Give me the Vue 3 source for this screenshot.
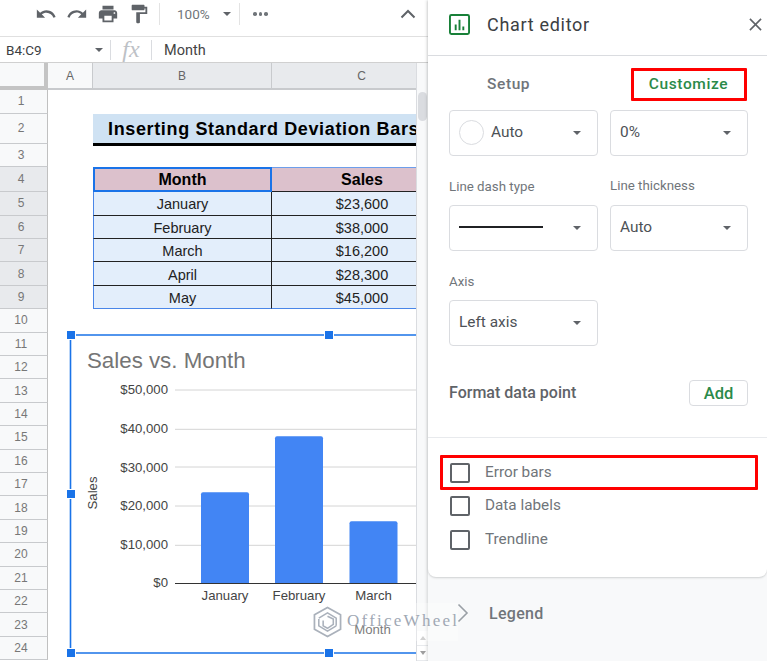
<script setup>
const rowNumbers = Array.from({ length: 24 }, (_, i) => i + 1)
const tableRows = {
  4: { b: 'Month', c: 'Sales', head: true },
  5: { b: 'January', c: '$23,600' },
  6: { b: 'February', c: '$38,000' },
  7: { b: 'March', c: '$16,200' },
  8: { b: 'April', c: '$28,300' },
  9: { b: 'May', c: '$45,000' }
}
const gridY = [390, 429.3, 467, 506, 545.3]
const yLabels = ['$50,000', '$40,000', '$30,000', '$20,000', '$10,000', '$0']
const yLabelY = [393.5, 432.5, 471.5, 509.5, 548.5, 587]
const bars = [
  { name: 'January', x: 201, top: 492.3 },
  { name: 'February', x: 275, top: 436.3 },
  { name: 'March', x: 349.5, top: 521.3 }
]
const handles = [
  [71, 335], [329, 335], [71, 494], [71, 653], [329, 653]
]
const checks = ['Error bars', 'Data labels', 'Trendline']
</script>

<template>
  <div class="app">
    <section class="sheet">
      <div class="toolbar">
        <svg class="tb-icon" viewBox="0 0 24 24"><path d="M12.5 8c-2.65 0-5.05.99-6.9 2.6L2 7v9h9l-3.62-3.62c1.39-1.16 3.16-1.88 5.12-1.88 3.54 0 6.55 2.31 7.6 5.5l2.37-.78C21.08 11.03 17.15 8 12.5 8z"/></svg>
        <svg class="tb-icon" viewBox="0 0 24 24"><path d="M18.4 10.6C16.55 8.99 14.15 8 11.5 8c-4.65 0-8.58 3.03-9.96 7.22l2.37.78c1.05-3.19 4.05-5.5 7.59-5.5 1.95 0 3.73.72 5.12 1.88L13 16h9V7l-3.6 3.6z"/></svg>
        <svg class="tb-icon" viewBox="0 0 24 24"><path d="M19 8H5c-1.66 0-3 1.34-3 3v6h4v4h12v-4h4v-6c0-1.66-1.34-3-3-3zm-3 11H8v-5h8v5zm3-7c-.55 0-1-.45-1-1s.45-1 1-1 1 .45 1 1-.45 1-1 1zm-1-9H6v4h12V3z"/></svg>
        <svg class="tb-icon" viewBox="0 0 24 24"><path d="M18 4V3c0-.55-.45-1-1-1H5c-.55 0-1 .45-1 1v4c0 .55.45 1 1 1h12c.55 0 1-.45 1-1V6h1v4H9v11c0 .55.45 1 1 1h2c.55 0 1-.45 1-1v-9h8V4h-3z"/></svg>
        <span class="tb-sep first"></span>
        <span class="zoom-val">100%</span>
        <span class="caret zoom-caret"></span>
        <span class="tb-sep second"></span>
        <span class="dots"><i></i><i></i><i></i></span>
        <svg class="collapse" viewBox="0 0 16 10"><path d="M1.5 8.5 8 2l6.5 6.5" /></svg>
      </div>

      <div class="formula">
        <span class="namebox">B4:C9</span>
        <span class="caret name-caret"></span>
        <span class="fsep"></span>
        <span class="fx">fx</span>
        <span class="fsep"></span>
        <span class="fvalue">Month</span>
      </div>

      <div class="body">
        <div class="grid">
          <div class="corner"></div>
          <div class="colhead">A</div>
          <div class="colhead selected">B</div>
          <div class="colhead selected last">C</div>

          <template v-for="n in rowNumbers" :key="n">
            <div class="rowhead" :class="{ selected: tableRows[n] }">{{ n }}</div>
            <div class="blank"></div>
            <div v-if="n === 2" class="title-cell">Inserting Standard Deviation Bars</div>
            <template v-else-if="tableRows[n]">
              <div class="cell" :class="{ head: tableRows[n].head, active: n === 4, bottom: n === 9 }">{{ tableRows[n].b }}</div>
              <div class="cell c" :class="{ head: tableRows[n].head, top: n === 4, bottom: n === 9 }">{{ tableRows[n].c }}</div>
            </template>
            <div v-else class="blank wide"></div>
          </template>
        </div>

        <div class="scrollbar">
          <div class="thumb"></div>
          <div class="arrows">
            <span class="arrow-btn"><span class="arrow up"></span></span>
            <span class="arrow-btn"><span class="arrow down"></span></span>
          </div>
        </div>

        <svg class="chart" viewBox="48 90 368 571" width="368" height="571">
          <rect x="70.5" y="335" width="346" height="318" fill="#fff" />
          <text x="87" y="367.5" class="ch-title">Sales vs. Month</text>
          <line v-for="y in gridY" :key="y" x1="175" x2="416" :y1="y" :y2="y" class="gridline" />
          <text v-for="(l, i) in yLabels" :key="l" x="168" :y="yLabelY[i]" text-anchor="end" class="ch-label">{{ l }}</text>
          <g v-for="b in bars" :key="b.name">
            <path :d="`M${b.x} 583.5V${b.top + 2}q0-2 2-2h44q2 0 2 2V583.5z`" fill="#4285f4" />
            <text :x="b.x + 24" y="600" text-anchor="middle" class="ch-label">{{ b.name }}</text>
          </g>
          <line x1="175" x2="416" y1="583.5" y2="583.5" stroke="#333" stroke-width="1" />
          <text x="372.5" y="634" text-anchor="middle" class="ch-label">Month</text>
          <text transform="translate(96.5 493) rotate(-90)" text-anchor="middle" class="ch-label">Sales</text>
          <path d="M70.5 653V335H416M70.5 653H416" fill="none" stroke="#1a73e8" stroke-width="1.6" />
          <rect v-for="h in handles" :key="h.join()" :x="h[0] - 4.5" :y="h[1] - 4.5" width="9" height="9" fill="#1a73e8" stroke="#fff" stroke-width="1" />
        </svg>
      </div>
    </section>

    <aside class="panel">
      <div class="card">
        <header class="panel-head">
          <svg class="chart-icon" viewBox="0 0 22 22">
            <rect x="1" y="1" width="20" height="20" rx="1.5" fill="none" stroke="#188038" stroke-width="2" />
            <path d="M6 11h2v6H6zM10 6h2v11h-2zM14 13h2v4h-2z" fill="#188038" />
          </svg>
          <span class="panel-title">Chart editor</span>
          <svg class="close" viewBox="0 0 14 14"><path d="M1 1l12 12M13 1 1 13" /></svg>
        </header>

        <div class="tabs">
          <span class="tab">Setup</span>
          <span class="tab customize">Customize</span>
        </div>

        <div class="fields">
          <div class="select"><span class="swatch"></span><span class="sel-text">Auto</span><span class="caret"></span></div>
          <div class="select"><span class="sel-text">0%</span><span class="caret"></span></div>

          <div class="field-label">Line dash type</div>
          <div class="field-label raised">Line thickness</div>
          <div class="select"><span class="dash"></span><span class="caret"></span></div>
          <div class="select"><span class="sel-text">Auto</span><span class="caret"></span></div>

          <div class="field-label full">Axis</div>
          <div class="select"><span class="sel-text">Left axis</span><span class="caret"></span></div>
        </div>

        <div class="format-row">
          <span class="format-label">Format data point</span>
          <span class="add">Add</span>
        </div>

        <div class="divider"></div>

        <div class="checks">
          <span class="annot"></span>
          <label v-for="c in checks" :key="c" class="check">
            <span class="box"></span>
            <span class="check-text">{{ c }}</span>
          </label>
        </div>
      </div>

      <div class="legend">
        <svg class="chev" viewBox="0 0 12 20"><path d="M1.5 1.5 10 10l-8.5 8.5" /></svg>
        <span>Legend</span>
      </div>
    </aside>

    <div class="watermark">
      <svg viewBox="0 0 30 32" class="wm-logo">
        <path d="M15 1 28.5 8.5V23.5L15 31 1.5 23.5V8.5z" fill="none" stroke="#aab1bb" stroke-width="1.8" />
        <path d="M6 12 15 6.5 24 12V20M24 20 15 25.5 6 20V13M10.5 14.5V20L15 22.5 21 18.5V13L15 10" fill="none" stroke="#aab1bb" stroke-width="1.6" />
      </svg>
      <span class="wm-text">OfficeWheel</span>
    </div>
  </div>
</template>

<style>
html, body { margin: 0; background: #fff; }
</style>

<style scoped>
.app {
  position: relative;
  width: 767px;
  height: 661px;
  overflow: hidden;
  display: flex;
  font-family: Roboto, "Liberation Sans", sans-serif;
  color: #5f6368;
}
.sheet {
  width: 428px;
  flex: none;
  display: flex;
  flex-direction: column;
  background: #fff;
}
.toolbar {
  height: 37px;
  flex: none;
  box-sizing: border-box;
  display: flex;
  align-items: center;
  padding: 0 0 8px 35px;
  border-bottom: 1px solid #e0e0e0;
}
.tb-icon {
  width: 22px;
  height: 22px;
  fill: #5f6368;
  margin-right: 9px;
  flex: none;
}
.tb-sep {
  width: 1px;
  height: 22px;
  background: #e3e3e3;
}
.tb-sep.first { margin-right: 17px; }
.tb-sep.second { margin-left: 8px; margin-right: 13px; }
.zoom-val { font-size: 13.5px; width: 46px; color: #70757a; padding-bottom: 1px; }
.caret {
  width: 0;
  height: 0;
  border-left: 4.5px solid transparent;
  border-right: 4.5px solid transparent;
  border-top: 4.5px solid #5f6368;
  flex: none;
}
.dots { display: flex; gap: 2px; }
.dots i { width: 3.5px; height: 3.5px; border-radius: 50%; background: #70757a; display: block; }
.collapse {
  width: 16px;
  height: 10px;
  margin-left: auto;
  margin-right: 12px;
  fill: none;
  stroke: #5f6368;
  stroke-width: 2;
}
.formula {
  height: 26px;
  flex: none;
  display: flex;
  align-items: center;
  box-sizing: border-box;
  border-bottom: 1px solid #d0d0d0;
  padding-left: 6px;
  color: #3c4043;
}
.namebox { font-size: 13.5px; width: 90px; }
.name-caret { margin-left: -1px; margin-right: 7px; }
.fsep { width: 1px; height: 20px; background: #dadce0; flex: none; }
.fx {
  width: 40px;
  text-align: center;
  font: italic 24px "Liberation Serif", serif;
  color: #bdc1c6;
}
.fvalue { font-size: 14.5px; margin-left: 12px; padding-top: 2px; color: #444; }
.body {
  position: relative;
  flex: 1;
  display: flex;
  overflow: hidden;
  min-height: 0;
}
.grid {
  width: 416px;
  flex: none;
  overflow: hidden;
  display: grid;
  grid-template-columns: 48px 45px 179px 180px;
  grid-template-rows: 27px 23.5px 30px 23.5px 25.3px repeat(20, 23.4px);
  font-family: "Liberation Sans", Arial, sans-serif;
}
.corner {
  background: #f8f9fa;
  border-right: 4px solid #c4c4c4;
  border-bottom: 4px solid #c4c4c4;
  box-sizing: border-box;
}
.colhead {
  background: #f8f9fa;
  border-right: 1px solid #c8cacd;
  border-bottom: 2px solid #c8cacd;
  box-sizing: border-box;
  display: flex;
  align-items: center;
  justify-content: center;
  font-size: 12px;
  color: #666;
}
.colhead.selected { background: #e8eaed; }
.rowhead {
  background: #f8f9fa;
  border-right: 1px solid #c0c0c0;
  border-bottom: 1px solid #c8cacd;
  box-sizing: border-box;
  display: flex;
  align-items: center;
  justify-content: center;
  padding-right: 5px;
  font-size: 12px;
  color: #777;
}
.rowhead.selected { background: #e8eaed; }
.blank { background: #fff; }
.blank.wide { grid-column: span 2; }
.title-cell {
  grid-column: span 2;
  background: #cfe2f3;
  border-bottom: 3.5px solid #000;
  box-sizing: border-box;
  height: 32px;
  padding-left: 15px;
  font-size: 18px;
  font-weight: 700;
  letter-spacing: 0.64px;
  line-height: 31px;
  white-space: nowrap;
  overflow: hidden;
  color: #000;
  position: relative;
  z-index: 1;
}
.cell {
  background: #e3eefb;
  border-bottom: 1px solid #222;
  border-right: 1px solid #222;
  border-left: 1.5px solid #4a86e8;
  box-sizing: border-box;
  display: flex;
  align-items: center;
  justify-content: center;
  padding-top: 2px;
  font-size: 14.5px;
  color: #222;
}
.cell.c { border-left: 0; border-right: 0; }
.cell.head {
  background: #dcc1cc;
  padding-top: 0;
  font-size: 16px;
  font-weight: 700;
  color: #000;
}
.cell.active { border: 2px solid #1a73e8; }
.cell.top { border-top: 1.5px solid #6d9eeb; }
.cell.bottom { border-bottom: 1.5px solid #4a86e8; }
.scrollbar {
  width: 12px;
  flex: none;
  background: #f8f9fa;
  border-left: 1px solid #dadce0;
  box-sizing: border-box;
  display: flex;
  flex-direction: column;
}
.thumb {
  width: 9px;
  height: 29px;
  margin: 29px 0 0 1px;
  border-radius: 5px;
  background: #dadce0;
}
.arrows {
  margin-top: auto;
  display: flex;
  flex-direction: column;
  background: #fff;
}
.arrow-btn {
  height: 14px;
  display: flex;
  align-items: center;
  justify-content: center;
  border-bottom: 1px solid #e8eaed;
}
.arrow { width: 0; height: 0; border-left: 3px solid transparent; border-right: 3px solid transparent; }
.arrow.up { border-bottom: 4px solid #bdbdbd; }
.arrow.down { border-top: 4px solid #9e9e9e; }
.chart {
  position: absolute;
  left: 48px;
  top: 27px;
  font-family: "Liberation Sans", Arial, sans-serif;
}
.ch-title { font-size: 22.3px; fill: #757575; }
.ch-label { font-size: 13.2px; fill: #444; }
.gridline { stroke: #d4d4d4; stroke-width: 1; }

.panel {
  width: 339px;
  flex: none;
  display: flex;
  flex-direction: column;
  background: #f8f9fa;
  box-shadow: -1px 0 3px rgba(60, 64, 67, 0.2);
  position: relative;
}
.card {
  height: 577px;
  flex: none;
  box-sizing: border-box;
  background: #fff;
  border-radius: 0 0 8px 8px;
  box-shadow: 0 1px 2px rgba(60, 64, 67, 0.22);
}
.panel-head {
  height: 56px;
  box-sizing: border-box;
  border-bottom: 1px solid #dadce0;
  display: flex;
  align-items: center;
  padding: 0 0 7px 21px;
}
.chart-icon { width: 21px; height: 21px; flex: none; }
.panel-title { margin-left: 17px; font-size: 18px; letter-spacing: 0.7px; color: #3c4043; }
.close {
  width: 13px;
  height: 13px;
  margin-left: auto;
  margin-right: 5px;
  fill: none;
  stroke: #5f6368;
  stroke-width: 1.7;
}
.tabs {
  margin-top: 12px;
  height: 33px;
  display: flex;
  align-items: center;
  padding-left: 59px;
  font-size: 15.5px;
  font-weight: 500;
  letter-spacing: 0.6px;
}
.tab { width: 144px; flex: none; color: #70757a; padding-bottom: 2px; box-sizing: border-box; }
.customize {
  width: 116px;
  height: 33px;
  box-sizing: border-box;
  border: 3px solid #f00;
  border-radius: 1px;
  display: flex;
  align-items: center;
  justify-content: center;
  padding-right: 1px;
  color: #2b8a49;
}
.fields {
  margin: 9px 19px 0 21px;
  display: grid;
  grid-template-columns: 149px 138px;
  column-gap: 12px;
}
.select {
  height: 46px;
  box-sizing: border-box;
  border: 1px solid #dadce0;
  border-radius: 4px;
  display: flex;
  align-items: center;
  padding: 0 16px 2px 9px;
  font-size: 15.4px;
  color: #4d5156;
}
.select .caret { margin-left: auto; margin-top: 2px; }
.swatch {
  width: 25px;
  height: 25px;
  box-sizing: border-box;
  border: 1px solid #dadce0;
  border-radius: 50%;
  margin-right: 7px;
  margin-top: 1px;
  flex: none;
}
.dash { width: 84px; height: 2px; background: #202124; }
.field-label {
  margin: 23px 0 11px;
  height: 15px;
  line-height: 15px;
  font-size: 13.3px;
  color: #70757a;
}
.field-label.raised { margin: 22px 0 12px; }
.field-label.full { grid-column: 1 / -1; }
.format-row {
  margin: 34px 19px 0 21px;
  height: 26px;
  display: flex;
  align-items: center;
  justify-content: space-between;
}
.format-label { font-size: 16px; font-weight: 500; color: #5f6368; padding-bottom: 2px; }
.add {
  width: 59px;
  height: 26px;
  box-sizing: border-box;
  border: 1px solid #dadce0;
  border-radius: 4px;
  display: flex;
  align-items: center;
  justify-content: center;
  font-size: 16.5px;
  font-weight: 500;
  color: #2b8a49;
}
.divider { margin-top: 31px; height: 1px; background: #e8eaed; }
.checks {
  position: relative;
  padding: 24.5px 0 0 22px;
  display: flex;
  flex-direction: column;
  gap: 13.5px;
}
.annot {
  position: absolute;
  left: 12px;
  top: 17px;
  width: 318px;
  height: 35px;
  box-sizing: border-box;
  border: 3px solid #f00;
  border-radius: 1px;
}
.check {
  display: flex;
  align-items: center;
  height: 20px;
  font-size: 15.3px;
  color: #70757a;
}
.check-text { padding-bottom: 2px; }
.box {
  width: 20px;
  height: 20px;
  box-sizing: border-box;
  border: 2px solid #5f6368;
  border-radius: 2px;
  margin-right: 15px;
  flex: none;
}
.legend {
  display: flex;
  align-items: center;
  padding: 26px 0 0 29px;
  font-size: 16px;
  font-weight: 500;
  letter-spacing: 0.3px;
  color: #70757a;
}
.chev {
  width: 12px;
  height: 20px;
  fill: none;
  stroke: #9aa0a6;
  stroke-width: 1.6;
  margin-right: 20px;
}
.watermark {
  position: absolute;
  left: 309px;
  top: 603px;
  width: 149px;
  height: 38px;
  display: flex;
  align-items: center;
  background: rgba(255, 255, 255, 0.3);
  z-index: 5;
}
.wm-logo { width: 29px; height: 32px; margin-left: 4px; flex: none; }
.wm-text {
  margin-left: 5px;
  padding-bottom: 3px;
  font: 17px "Liberation Serif", serif;
  letter-spacing: 2.25px;
  color: #a0a8b4;
  white-space: nowrap;
}
</style>
